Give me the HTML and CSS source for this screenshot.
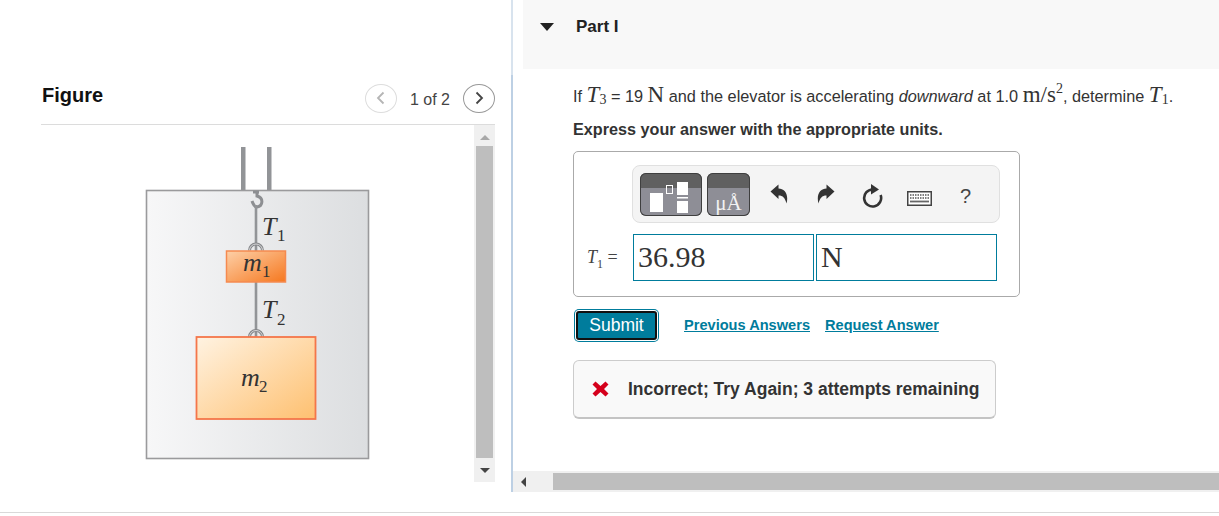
FILE: index.html
```html
<!DOCTYPE html>
<html lang="en">
<head>
    <meta charset="UTF-8">
    <title>Part I</title>
    <link rel="stylesheet" href="styles.css">
</head>
<body>
    <div class="panes">
        <div class="figure-pane">
            <div class="figure-head">
                <h2>Figure</h2>
                <div class="pager">
                    <span class="round-btn off">
                        <svg width="12" height="14" viewBox="0 0 12 14"><path d="M8.500 1.500 L3 7 L8.500 12.500" fill="none" stroke="#b5b5b5" stroke-width="1.800"/></svg>
                    </span>
                    <span class="pager-text">1 of 2</span>
                    <span class="round-btn">
                        <svg width="12" height="14" viewBox="0 0 12 14"><path d="M3.500 1.500 L9 7 L3.500 12.500" fill="none" stroke="#444" stroke-width="1.800"/></svg>
                    </span>
                </div>
            </div>
            <div class="figure-body">
                <svg class="figure-art" width="433" height="357" viewBox="41 125 433 357">
                    <defs>
                        <linearGradient id="car" x1="0" x2="1" y1="0" y2="0">
                            <stop offset="0" stop-color="#f7f7f8"/>
                            <stop offset="1" stop-color="#dcdee0"/>
                        </linearGradient>
                        <linearGradient id="small" x1="0" x2="1" y1="0" y2="1">
                            <stop offset="0" stop-color="#fdd0a8"/>
                            <stop offset="1" stop-color="#f6781f"/>
                        </linearGradient>
                        <linearGradient id="big" x1="0" x2="1" y1="0" y2="1">
                            <stop offset="0" stop-color="#fff3e2"/>
                            <stop offset="1" stop-color="#fec070"/>
                        </linearGradient>
                    </defs>
                    <rect x="241" y="147" width="4.500" height="44" fill="#929497"/>
                    <rect x="267" y="147" width="4.500" height="44" fill="#929497"/>
                    <rect x="146.500" y="190.500" width="222" height="268" fill="url(#car)" stroke="#9a9a9c" stroke-width="1.600"/>
                    <path d="M253 192 H259 M257 192 V196 C264 198 263 206 257 207 C254 207 253 204 252 201" fill="none" stroke="#8d8f92" stroke-width="3"/>
                    <path d="M256 205 V251 M256 282 V338" stroke="#929497" stroke-width="2.600" fill="none"/>
                    <path d="M249.500 250.500 A6.500 6.500 0 0 1 262.500 250.500 M249.500 337 A6.500 6.500 0 0 1 262.500 337" fill="none" stroke="#85878a" stroke-width="3"/>
                    <path d="M249.500 250.500 A6.500 6.500 0 0 1 262.500 250.500 M249.500 337 A6.500 6.500 0 0 1 262.500 337" fill="none" stroke="#e8e8ea" stroke-width="0.800"/>
                    <rect x="226.500" y="251" width="59" height="31" fill="url(#small)" stroke="#f58a50" stroke-width="1.500"/>
                    <rect x="196.500" y="337" width="119" height="82" fill="url(#big)" stroke="#f4764a" stroke-width="1.800"/>
                    <text class="fig-label" x="262" y="235">T</text>
                    <text class="fig-sub" x="277" y="241">1</text>
                    <text class="fig-label" x="243" y="271">m</text>
                    <text class="fig-sub" x="262" y="277">1</text>
                    <text class="fig-label" x="262" y="318">T</text>
                    <text class="fig-sub" x="277" y="325">2</text>
                    <text class="fig-label" x="241" y="386">m</text>
                    <text class="fig-sub" x="259" y="392">2</text>
                </svg>
                <div class="v-scroll">
                    <span class="arrow-up light"></span>
                    <div class="v-thumb"></div>
                    <span class="arrow-down"></span>
                </div>
            </div>
        </div>

        <div class="divider"></div>

        <div class="question-pane">
            <div class="part-head">
                <span class="part-caret"></span>
                <h3>Part I</h3>
            </div>
            <div class="question">
                <p class="prompt">If <span class="math"><i>T</i><sub>3</sub></span> = 19 <span class="math">N</span> and the elevator is accelerating <em>downward</em> at 1.0 <span class="math">m/s<sup>2</sup></span>, determine <span class="math"><i>T</i><sub>1</sub></span>.</p>
                <p class="instruction">Express your answer with the appropriate units.</p>

                <div class="answer-box">
                    <div class="toolbar">
                        <div class="tool-btn wide">
                            <svg width="62" height="43" viewBox="0 0 62 43">
                                <rect x="10" y="20" width="13" height="19" fill="#fff"/>
                                <rect x="26.500" y="12.500" width="6" height="8" fill="none" stroke="#fff"/>
                                <rect x="37" y="9" width="11" height="13" fill="#fff"/>
                                <rect x="37" y="24" width="11" height="1.500" fill="#fff"/>
                                <rect x="37" y="28" width="11" height="12" fill="#fff"/>
                            </svg>
                        </div>
                        <div class="tool-btn narrow">
                            <span class="mu-a">μÅ</span>
                        </div>
                        <div class="tool-icons">
                            <svg class="tool-undo" width="18" height="20" viewBox="0 0 18 20"><path d="M0.500 7.500 L8.500 0.500 V4.500 C14.500 4.500 19 10 16.500 19.500 C15 14 13 11.500 8.500 11.500 V15 Z" fill="#333"/></svg>
                            <svg width="18" height="20" viewBox="0 0 18 20"><path d="M17.500 7.500 L9.500 0.500 V4.500 C3.500 4.500 -1 10 1.500 19.500 C3 14 5 11.500 9.500 11.500 V15 Z" fill="#333"/></svg>
                            <svg class="tool-reload" width="21" height="24" viewBox="0 0 21 24"><path d="M18.600 11 A8.500 8.500 0 1 1 10.500 5.500" fill="none" stroke="#333" stroke-width="2.600"/><path d="M9 0 L17 5.500 L9 10.500 Z" fill="#333"/></svg>
                            <svg class="tool-keys" width="25" height="15" viewBox="0 0 25 15">
                                <rect x="0.750" y="0.750" width="23.500" height="13.500" fill="#fff" stroke="#444" stroke-width="1.500"/>
                                <path d="M3 4 H22 M3 7 H22" stroke="#555" stroke-width="1.600" stroke-dasharray="1.500 1"/>
                                <path d="M3 10.500 H22" stroke="#666" stroke-width="1.800"/>
                            </svg>
                            <span class="help">?</span>
                        </div>
                    </div>
                    <div class="answer-row">
                        <span class="answer-label"><i>T</i><sub>1</sub> =</span>
                        <input class="answer-input" type="text" value="36.98">
                        <input class="answer-input" type="text" value="N">
                    </div>
                </div>

                <div class="actions">
                    <button class="submit">Submit</button>
                    <a class="link first" href="#">Previous Answers</a>
                    <a class="link" href="#">Request Answer</a>
                </div>

                <div class="feedback">
                    <svg width="17" height="16" viewBox="0 0 17 16"><path d="M0.500 3.500 L3.500 0.500 L8.500 5 L13.500 0.500 L16.500 3.500 L12 8 L16.500 12.500 L13.500 15.500 L8.500 11 L3.500 15.500 L0.500 12.500 L5 8 Z" fill="#d5001c"/></svg>
                    <span>Incorrect; Try Again; 3 attempts remaining</span>
                </div>
            </div>
            <div class="h-scroll">
                <span class="arrow-left"></span>
                <div class="h-thumb"></div>
            </div>
        </div>
    </div>
    <div class="page-end"></div>
</body>
</html>
```

FILE: styles.css
```css
body {
    margin: 0;
    height: 516px;
    overflow: hidden;
    background-color: #fff;
    color: #222;
    font-family: "Liberation Sans", Arial, sans-serif;
    font-size: 14px;
}
.panes {
    display: grid;
    grid-template-columns: 511px 2px 1fr;
    height: 492px;
}
.page-end {
    margin-top: 20px;
    border-top: 1px solid #d9d9d9;
}

/* figure side */
.figure-pane {
    padding-top: 75px;
    box-sizing: border-box;
}
.figure-head {
    display: flex;
    align-items: center;
    justify-content: space-between;
    height: 50px;
    margin-left: 41px;
    width: 454px;
    padding-bottom: 9px;
    padding-left: 1px;
    box-sizing: border-box;
    border-bottom: 1px solid #dcdcdc;
}
.figure-head h2 {
    margin: 0;
    font-size: 20px;
    color: #111;
}
.pager {
    display: flex;
    align-items: center;
    gap: 13px;
    margin-top: 6px;
}
.pager-text {
    margin-top: 4px;
    font-size: 16px;
    color: #444;
}
.round-btn {
    display: flex;
    align-items: center;
    justify-content: center;
    width: 32px;
    height: 29px;
    box-sizing: border-box;
    border: 1px solid #999;
    border-radius: 50%;
}
.round-btn.off {
    border-color: #ddd;
}
.figure-body {
    display: flex;
    margin-left: 41px;
}
.figure-art {
    display: block;
}
.v-scroll {
    display: flex;
    flex-direction: column;
    align-items: center;
    width: 21px;
    height: 357px;
    background-color: #f0f0f0;
}
.v-thumb {
    width: 17px;
    height: 312px;
    margin: 6px 0 10px;
    background-color: #bebebe;
}
.arrow-up {
    width: 0;
    height: 0;
    margin-top: 10px;
    border-left: 5px solid transparent;
    border-right: 5px solid transparent;
    border-bottom: 5px solid #555;
}
.arrow-up.light {
    border-bottom-color: #a8a8a8;
}
.arrow-down {
    width: 0;
    height: 0;
    border-left: 5px solid transparent;
    border-right: 5px solid transparent;
    border-top: 5px solid #444;
}
.fig-label {
    font-family: "Liberation Serif", serif;
    font-style: italic;
    font-size: 26px;
    fill: #333;
}
.fig-sub {
    font-family: "Liberation Serif", serif;
    font-size: 17px;
    fill: #333;
}

.divider {
    background: linear-gradient(#d8e3ee 75px, #bdd0e4 75px);
}

/* question side */
.question-pane {
    display: flex;
    flex-direction: column;
}
.part-head {
    display: flex;
    align-items: center;
    height: 69px;
    margin-left: 10px;
    padding: 0 0 16px 17px;
    box-sizing: border-box;
    background-color: #f8f8f8;
}
.part-head h3 {
    margin: 0 0 0 22px;
    font-size: 17px;
    color: #222;
}
.part-caret {
    width: 0;
    height: 0;
    border-left: 7px solid transparent;
    border-right: 7px solid transparent;
    border-top: 8px solid #222;
}
.question {
    flex: 1;
    padding-left: 60px;
}
.prompt {
    margin: 16px 0 0;
    height: 21px;
    line-height: 22px;
    font-size: 16.300px;
    color: #333;
}
.math {
    font-family: "Liberation Serif", serif;
    font-size: 23px;
    line-height: 0;
}
.math sub, .math sup {
    font-size: 14px;
    line-height: 0;
}
.math sub {
    vertical-align: -2px;
}
.instruction {
    margin: 13px 0 0;
    font-size: 16.200px;
    line-height: 20px;
    font-weight: bold;
    color: #333;
}
.answer-box {
    width: 447px;
    height: 146px;
    margin-top: 12px;
    box-sizing: border-box;
    border: 1px solid #aaa;
    border-radius: 5px;
}
.toolbar {
    display: flex;
    align-items: center;
    width: 368px;
    height: 58px;
    margin: 13px 0 0 58px;
    padding-left: 7px;
    box-sizing: border-box;
    background-color: #f4f4f4;
    border: 1px solid #e0e0e0;
    border-radius: 8px;
}
.tool-btn {
    height: 43px;
    margin-right: 5px;
    box-sizing: border-box;
    overflow: hidden;
    border-radius: 6px;
    background: linear-gradient(#606060 15px, #8e8e96 15px);
    box-shadow: inset 0 0 0 1px #3f3f3f;
}
.tool-btn svg {
    display: block;
}
.wide {
    width: 62px;
}
.narrow {
    width: 43px;
    display: flex;
    justify-content: center;
    align-items: flex-end;
}
.mu-a {
    font-family: "Liberation Serif", serif;
    font-size: 21px;
    line-height: 26px;
    color: #f2f2f2;
}
.tool-icons {
    display: flex;
    align-items: center;
    gap: 27px;
    margin-left: 15px;
}
.tool-undo {
    margin-right: 2px;
}
.tool-reload {
    margin-top: 4px;
}
.tool-keys {
    margin: 9px 0 0 -3px;
}
.help {
    margin: 5px 0 0 1px;
    font-size: 20px;
    color: #444;
}
.answer-row {
    display: flex;
    align-items: center;
    margin: 11px 0 0 13px;
}
.answer-label {
    width: 46px;
    font-family: "Liberation Serif", serif;
    font-size: 18px;
    color: #444;
}
.answer-label sub {
    font-size: 12px;
    line-height: 0;
}
.answer-input {
    width: 181px;
    height: 47px;
    margin: 0 2px 0 0;
    padding: 0 4px 2px;
    box-sizing: border-box;
    border: 1px solid #007c9c;
    border-radius: 0;
    font-family: "Liberation Serif", serif;
    font-size: 30px;
    color: #333;
}
.actions {
    display: flex;
    align-items: center;
    margin: 14px 0 0 3px;
}
.submit {
    width: 81px;
    height: 29px;
    padding: 0;
    box-sizing: border-box;
    background-color: #007c9c;
    border: 2px solid #111;
    border-radius: 3px;
    box-shadow: 0 0 0 1px #fff, 0 0 0 2px #007c9c;
    color: #fff;
    font-family: "Liberation Sans", Arial, sans-serif;
    font-size: 17.500px;
}
.link {
    margin: 0 0 2px 15px;
    color: #007c9c;
    font-size: 14.600px;
    font-weight: bold;
}
.link.first {
    margin-left: 27px;
}
.feedback {
    display: flex;
    align-items: center;
    gap: 19px;
    width: 423px;
    height: 59px;
    margin-top: 20px;
    padding-left: 18px;
    box-sizing: border-box;
    background-color: #f9f9f9;
    border: 1px solid #ccc;
    border-bottom: 2px solid #c4c4c4;
    border-radius: 6px;
    font-size: 17.500px;
    font-weight: bold;
    color: #333;
}
.h-scroll {
    display: flex;
    align-items: center;
    height: 21px;
    background-color: #f0f0f0;
}
.arrow-left {
    width: 0;
    height: 0;
    margin-left: 8px;
    border-top: 5px solid transparent;
    border-bottom: 5px solid transparent;
    border-right: 5px solid #444;
}
.h-thumb {
    flex: 1;
    height: 17px;
    margin-left: 27px;
    background-color: #bebebe;
}
```
